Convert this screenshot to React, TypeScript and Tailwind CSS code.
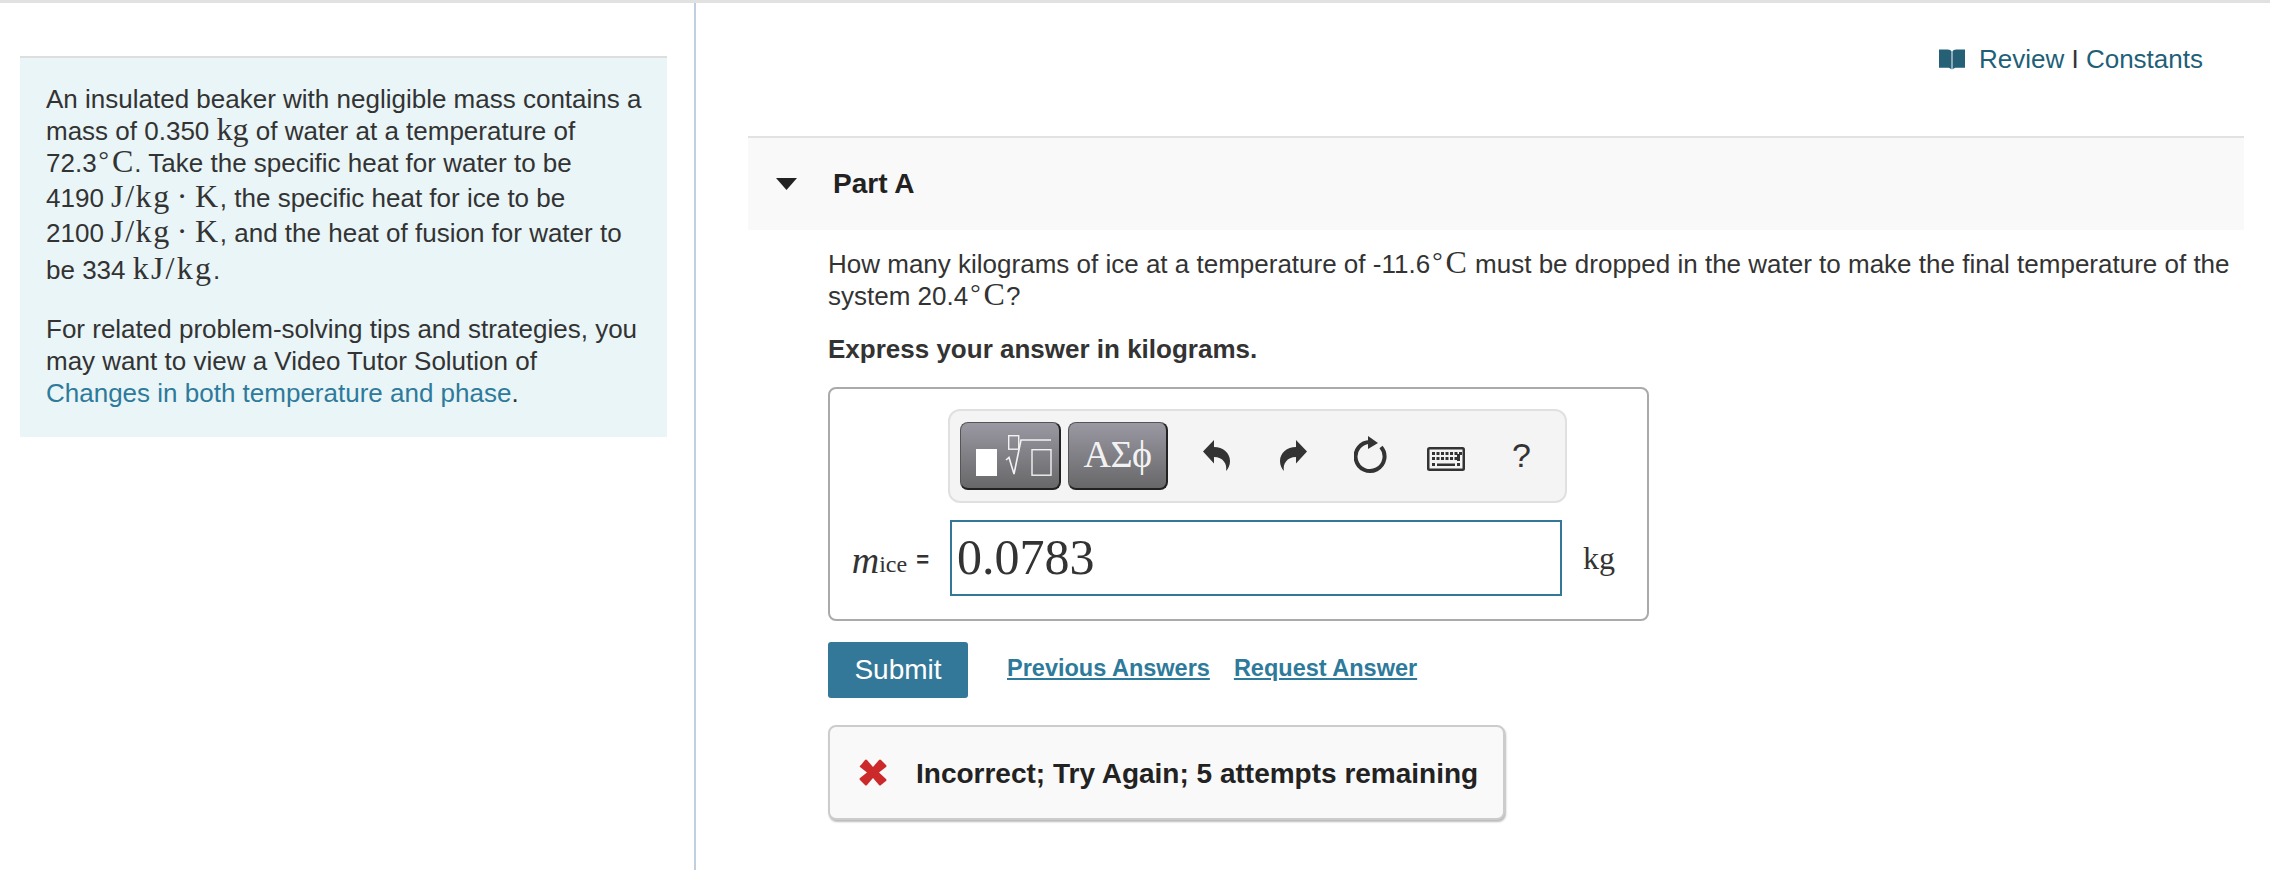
import React from "react";

const sans = "font-['Liberation_Sans',Arial,sans-serif]";

function M({ children }: { children: React.ReactNode }) {
  return <span className="font-['Liberation_Serif',serif] text-[32px] leading-[20px]">{children}</span>;
}

function MW({ children }: { children: React.ReactNode }) {
  return <span className="font-['Liberation_Serif',serif] text-[32px] leading-[20px] tracking-[1.6px]">{children}</span>;
}

function Dot() {
  return <span className="mx-[6px]">·</span>;
}

function Deg({ c }: { c: string }) {
  return (
    <>
      <span className="relative top-[-4px] ml-[2px] font-['Liberation_Serif',serif] text-[26px] leading-[10px]">°</span>
      <span className="ml-[3px] mr-[1px] font-['Liberation_Serif',serif] text-[32px] leading-[20px]">{c}</span>
    </>
  );
}

function Undo({ flip }: { flip?: boolean }) {
  return (
    <svg width="27" height="31" viewBox="0 0 27 31" className={flip ? "-scale-x-100" : ""}>
      <path d="M0 11.5 L11 0 V7 C20 7 27 13 27 21 C27 25 25.5 28.5 23 31 C24.5 24 20 17 11 17 V23.5 Z" fill="#333" />
    </svg>
  );
}

function Refresh() {
  return (
    <svg width="33" height="38" viewBox="0 0 33 38">
      <path d="M16 6 A14.5 14.5 0 1 0 27 11" fill="none" stroke="#333" strokeWidth="4" />
      <path d="M14 0 L24 7 L14 13 Z" fill="#333" />
    </svg>
  );
}

function Keyboard() {
  const rows = [
    [5, 9.5, 14, 18.5, 23, 27.5, 32],
    [5, 9.5, 14, 18.5, 23, 27.5],
  ];
  return (
    <svg width="38" height="24" viewBox="0 0 38 24">
      <rect x="0" y="0" width="38" height="24" rx="2.5" fill="#333" />
      <rect x="2.5" y="2.5" width="33" height="19" fill="#f4f4f4" />
      {rows[0].map((x) => <rect key={x} x={x} y="5" width="3" height="3" fill="#333" />)}
      {rows[1].map((x) => <rect key={x} x={x} y="10" width="3" height="3" fill="#333" />)}
      <rect x="30" y="7" width="3" height="7" fill="#333" />
      <rect x="5" y="16" width="3" height="3" fill="#333" />
      <rect x="10" y="16.5" width="18" height="2.5" fill="#333" />
      <rect x="30" y="16" width="3" height="3" fill="#333" />
    </svg>
  );
}

function TemplateIcon() {
  return (
    <svg width="80" height="44" viewBox="0 0 80 44">
      <rect x="3" y="14" width="21" height="27" fill="#fff" />
      <rect x="35.7" y="0.7" width="10" height="13.5" fill="none" stroke="#f2f2f2" strokeWidth="1.4" />
      <path d="M33 25 L36 22.5 L41 39 L48 5 H78" fill="none" stroke="#f2f2f2" strokeWidth="1.6" />
      <rect x="59" y="14.7" width="19" height="25.5" fill="none" stroke="#f2f2f2" strokeWidth="1.4" />
    </svg>
  );
}

function BookIcon() {
  return (
    <svg width="26" height="21" viewBox="0 0 27 21">
      <path d="M0 0 H9 C11 0 12.5 0.8 13 2 V21 C12 19.6 10.5 19 9 19 H0 Z" fill="#256076" />
      <path d="M27 0 H18 C16 0 14.5 0.8 14 2 V21 C15 19.6 16.5 19 18 19 H27 Z" fill="#256076" />
    </svg>
  );
}

export default function App() {
  const gradBtn =
    "flex h-[68px] items-center justify-center rounded-[8px] border border-[#555] border-b-2 border-r-2 border-b-[#222] border-r-[#222] bg-gradient-to-b from-[#9a98a2] to-[#68686a]";
  return (
    <div className={`${sans} flex h-[870px] w-[2270px] flex-col overflow-hidden bg-white text-[26px] leading-[32px] text-[#333]`}>
      <div className="h-[3px] bg-[#e1e1e1]" />
      <div className="flex flex-1">
        <div className="w-[696px] shrink-0 border-r-2 border-[#bfcfdf] pt-[53px] pl-5 pr-[27px]">
          <div className="border-t-[2px] border-[#dedede] bg-[#e9f5f7] pb-[28px] pl-[26px] pt-[25px]">
            <div className="whitespace-nowrap">
              <p>An insulated beaker with negligible mass contains a</p>
              <p>mass of 0.350 <M>kg</M> of water at a temperature of</p>
              <p>72.3<Deg c="C" />. Take the specific heat for water to be</p>
              <p className="mt-[3px]">4190 <MW>J/kg<Dot />K</MW>, the specific heat for ice to be</p>
              <p className="mt-[3px]">2100 <MW>J/kg<Dot />K</MW>, and the heat of fusion for water to</p>
              <p className="mt-[5px]">be 334 <span className="font-['Liberation_Serif',serif] text-[32px] leading-[20px] tracking-[2.2px]">kJ/kg</span>.</p>
            </div>
            <div className="mt-[27px] whitespace-nowrap">
              <p>For related problem-solving tips and strategies, you</p>
              <p>may want to view a Video Tutor Solution of</p>
              <p><span className="text-[#2e7a9b]">Changes in both temperature and phase</span>.</p>
            </div>
          </div>
        </div>
        <div className="flex-1 pl-[52px] pr-[26px]">
          <div className="flex h-[133px] items-start justify-end gap-[14px] pr-[41px] pt-[40px] text-[#1f5f78]">
            <div className="mt-[6px]"><BookIcon /></div>
            <div>
              Review <span className="text-[#333]">I</span> Constants
            </div>
          </div>
          <div className="flex h-[94px] items-center border-t-2 border-[#e2e2e2] bg-[#f9f9f9] pl-[28px]">
            <svg width="21" height="12" viewBox="0 0 21 12" className="mr-[36px]">
              <path d="M0 0 H21 L10.5 12 Z" fill="#222" />
            </svg>
            <span className="text-[28px] font-bold text-[#222]">Part A</span>
          </div>
          <div className="pl-[80px]">
            <p className="mt-[18px] whitespace-nowrap">
              How many kilograms of ice at a temperature of -11.6<Deg c="C" /> must be dropped in the water to make the final temperature of the<br />
              system 20.4<Deg c="C" />?
            </p>
            <p className="mt-[21px] font-bold">Express your answer in kilograms.</p>
            <div className="mt-[22px] h-[234px] w-[821px] rounded-[8px] border-2 border-[#aaa] pt-[20px]">
              <div className="ml-[118px] flex h-[94px] w-[619px] items-center rounded-[12px] border-2 border-[#e0e0e0] bg-[#f4f4f4] pl-[10px]">
                <div className={`${gradBtn} w-[101px] pl-[5px] pt-[2px]`}><TemplateIcon /></div>
                <div className={`${gradBtn} ml-[7px] w-[100px] pb-[3px] font-['Liberation_Serif',serif] text-[38px] tracking-[-0.5px] text-[#f2f2f2]`}>ΑΣϕ</div>
                <div className="ml-[35px] mb-[2px]"><Undo /></div>
                <div className="ml-[50px] mb-[2px]"><Undo flip /></div>
                <div className="ml-[47px] mb-[2px]"><Refresh /></div>
                <div className="ml-[40px] mt-[6px]"><Keyboard /></div>
                <div className="ml-[47px] text-[34px] leading-none mb-[2px]">?</div>
              </div>
              <div className="mt-[17px] flex items-center">
                <div className="mt-[3px] flex w-[120px] shrink-0 items-center justify-end whitespace-nowrap pr-[21px]">
                  <span className="font-['Liberation_Serif',serif] text-[38px] italic">m</span>
                  <span className="mt-[8px] font-['Liberation_Serif',serif] text-[24px]">ice</span>
                  <span className="ml-[9px] text-[22px] font-bold">=</span>
                </div>
                <div className="flex h-[76px] w-[612px] items-center border-2 border-[#337899] pb-[2px] pl-[5px] font-['Liberation_Serif',serif] text-[50px] text-[#333]">0.0783</div>
                <span className="ml-[21px] font-['Liberation_Serif',serif] text-[32px]">kg</span>
              </div>
            </div>
            <div className="mt-[21px] flex items-center">
              <div className="flex h-[56px] w-[140px] items-center justify-center rounded-[3px] bg-[#337899] text-[28px] text-white">Submit</div>
              <a className="ml-[39px] mb-[4px] text-[23.5px] font-bold text-[#2e7a9b] underline">Previous Answers</a>
              <a className="ml-[24px] mb-[4px] text-[23.5px] font-bold text-[#2e7a9b] underline">Request Answer</a>
            </div>
            <div className="mt-[27px] flex h-[95px] w-[677px] items-center rounded-[8px] border-2 border-[#ccc] bg-[#f9f9f9] pl-[29px] shadow-[1px_2px_2px_#bbb]">
              <svg width="28" height="27" viewBox="0 0 28 27" className="mr-[29px]">
                <path d="M2 6 L6 1 Q7 0 8 1 L14 8 L20 1 Q21 0 22 1 L27 6 Q28 7 27 8 L20 13.5 L27 20 Q28 21 27 22 L22 26 Q21 27 20 26 L14 19 L8 26 Q7 27 6 26 L1 21 Q0 20 1 19 L8 13.5 L1 8 Q0 7 2 6 Z" fill="#cc2a2a" />
              </svg>
              <span className="mt-[2px] whitespace-nowrap text-[28px] font-bold text-[#222]">Incorrect; Try Again; 5 attempts remaining</span>
            </div>
          </div>
        </div>
      </div>
    </div>
  );
}
